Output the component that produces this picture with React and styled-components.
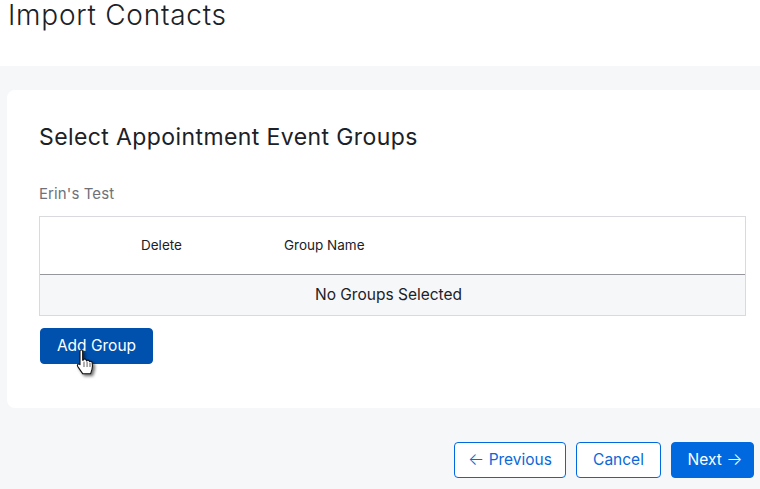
import React from "react";
import styled, { createGlobalStyle } from "styled-components";

const GlobalStyle = createGlobalStyle`
  html, body {
    margin: 0;
    padding: 0;
    height: 100%;
    overflow: hidden;
    background: #f6f7f9;
    font-family: Inter, "Liberation Sans", sans-serif;
  }
`;

const Page = styled.div`
  width: 760px;
  height: 489px;
  overflow: hidden;
  position: relative;
`;

const Header = styled.header`
  height: 66px;
  background: #fff;
  padding-left: 8px;
  box-sizing: border-box;
`;

const Title = styled.h1`
  margin: 0;
  font-size: 28px;
  line-height: 30px;
  font-weight: 300;
  color: #1b2127;
  letter-spacing: 0.75px;
`;

const Main = styled.main`
  padding: 24px 0 0 7px;
`;

const Card = styled.section`
  width: 790px;
  height: 318px;
  box-sizing: border-box;
  background: #fff;
  border-radius: 8px;
  padding: 33px 32px 0;
`;

const CardTitle = styled.h2`
  margin: 0;
  font-size: 23px;
  line-height: 28px;
  font-weight: 400;
  color: #1b2127;
  letter-spacing: 0.4px;
`;

const Subtitle = styled.div`
  margin-top: 34px;
  font-size: 15px;
  line-height: 18px;
  color: #6e7278;
  letter-spacing: 0.1px;
`;

const Table = styled.div`
  margin-top: 13px;
  width: 707px;
  box-sizing: border-box;
  border: 1px solid #d8dadd;
`;

const HeadRow = styled.div`
  display: grid;
  grid-template-columns: 244px 1fr;
  height: 58px;
  padding-bottom: 2px;
  align-items: center;
  border-bottom: 1px solid #96979d;
  box-sizing: border-box;
  font-size: 13.5px;
  color: #1b2127;
`;

const HeadCell = styled.div`
  padding-left: ${props => props.$indent}px;
`;

const EmptyRow = styled.div`
  height: 40px;
  box-sizing: border-box;
  padding: 0 8px 2px 0;
  background: #f6f7f9;
  display: flex;
  align-items: center;
  justify-content: center;
  font-size: 15.5px;
  color: #1b2127;
`;

const Button = styled.button`
  box-sizing: border-box;
  height: 36px;
  width: ${props => props.$width}px;
  padding: 0 0 2px ${props => (props.$solid ? 5 : 0)}px;
  border-radius: 4px;
  font-family: inherit;
  font-size: 15.5px;
  font-weight: 400;
  border: 1px solid #0069e0;
  background: ${props => (props.$solid ? "#0069e0" : "#fff")};
  color: ${props => (props.$solid ? "#fff" : "#0a68d8")};
`;

const Arrow = styled.span`
  font-size: 17px;
  font-weight: 300;
  line-height: 16px;
`;

const AddButton = styled(Button)`
  display: block;
  margin: 12px 0 0 1px;
  background: #0050ae;
  border-color: #0050ae;
  color: #fff;
`;

const Footer = styled.footer`
  display: flex;
  justify-content: flex-end;
  gap: 10px;
  padding: 34px 6px 0 0;
`;

const Cursor = styled.svg`
  position: absolute;
  left: 76px;
  top: 349px;
  filter: drop-shadow(2px 2px 1.5px rgba(0, 0, 0, 0.55));
`;

export default function App() {
  return (
    <Page>
      <GlobalStyle />
      <Header>
        <Title>Import Contacts</Title>
      </Header>
      <Main>
        <Card>
          <CardTitle>Select Appointment Event Groups</CardTitle>
          <Subtitle>Erin's Test</Subtitle>
          <Table>
            <HeadRow>
              <HeadCell $indent={101}>Delete</HeadCell>
              <HeadCell $indent={0}>Group Name</HeadCell>
            </HeadRow>
            <EmptyRow>No Groups Selected</EmptyRow>
          </Table>
          <AddButton $width={113}>Add Group</AddButton>
        </Card>
        <Footer>
          <Button $width={112}><Arrow>←</Arrow> Previous</Button>
          <Button $width={85}>Cancel</Button>
          <Button $width={83} $solid>Next <Arrow>→</Arrow></Button>
        </Footer>
      </Main>
      <Cursor width="20" height="26" viewBox="1 0.5 15 19.500">
        <path
          d="M4 1.500c.8-.6 1.900-.2 2 .9V9l.6-.2c.3-1 1.700-1 2 0l.4.6c.4-.8 1.700-.7 2 .2l.3.5c.5-.6 1.600-.4 1.800.5.3 1.500.3 3.500-.1 5l-1 3.400H6l-3.800-5.500c-.6-1 .5-2.200 1.500-1.500l.3.300V2.500c0-.4 0-.8 0-1z"
          fill="#fff"
          stroke="#111"
          strokeWidth="0.8"
          strokeLinejoin="round"
        />
        <path d="M7 10v4M9.300 10v4M11.500 11v3" stroke="#555" strokeWidth="0.7" />
      </Cursor>
    </Page>
  );
}
